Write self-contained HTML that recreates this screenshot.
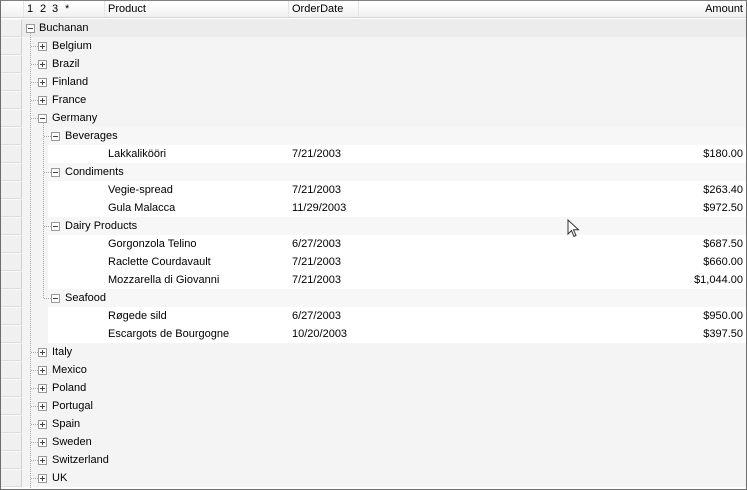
<!DOCTYPE html>
<html><head><style>
*{margin:0;padding:0;box-sizing:border-box}
body{width:747px;height:490px;overflow:hidden;background:#fff;font-family:"Liberation Sans",sans-serif;font-size:11px;color:#000;position:relative}
.frame{position:absolute;left:0;top:0;width:747px;height:490px;border:1px solid #6d6d6d;border-top:1px solid #808080}
.hdr{position:absolute;left:1px;top:1px;width:745px;height:17px;background:linear-gradient(#fff,#f1f1f1);border-bottom:1px solid #d4d4d4}
.hs{position:absolute;top:1px;width:1px;height:16px;background:#e6e6e6}
.t{position:absolute;white-space:nowrap;line-height:19px}
.row{position:absolute;left:22px;width:724px;height:18px}
.rh{position:absolute;left:1px;width:21px;height:18px;background:#f0f0f0;border-top:1px solid #fafafa;border-bottom:1px solid #dcdcdc;border-right:1px solid #d0d0d0}
.box{position:absolute;width:9px;height:9px;border:1px solid #9a9a9a;background:#fff}
.box:before{content:"";position:absolute;left:1px;top:3px;width:5px;height:1px;background:#444}
.plus:after{content:"";position:absolute;left:3px;top:1px;width:1px;height:5px;background:#444}
.vl{position:absolute;width:1px;border-left:1px dotted #a8a8a8}
.hl{position:absolute;height:1px;border-top:1px dotted #a8a8a8}
.r{right:4px;text-align:right}
</style></head><body>
<div class="hdr"></div>
<div class="hs" style="left:23px"></div><div class="hs" style="left:104px"></div><div class="hs" style="left:288px"></div><div class="hs" style="left:358px"></div>
<div class="t" style="left:27px;top:0;line-height:18px">1</div>
<div class="t" style="left:40px;top:0;line-height:18px">2</div>
<div class="t" style="left:52px;top:0;line-height:18px">3</div>
<div class="t" style="left:65px;top:0;line-height:18px">*</div>
<div class="t" style="left:108px;top:0;line-height:18px">Product</div>
<div class="t" style="left:292px;top:0;line-height:18px">OrderDate</div>
<div class="t" style="right:4px;top:0;line-height:18px">Amount</div>

<div class="row" style="top:19px;background:#ececec"></div>
<div class="row" style="top:37px;height:90px;background:#f4f4f4"></div>
<div class="row" style="top:109px;background:#f4f4f4"></div>
<div class="row" style="top:163px;background:#f7f7f7;left:48px;width:698px"></div>
<div class="row" style="top:217px;background:#f7f7f7;left:48px;width:698px"></div>
<div class="row" style="top:289px;background:#f7f7f7;left:48px;width:698px"></div>
<div class="row" style="top:127px;background:#f7f7f7;left:48px;width:698px"></div>
<div class="row" style="top:343px;height:144px;background:#f4f4f4"></div>
<div style="position:absolute;left:22px;top:127px;width:26px;height:216px;background:#f4f4f4"></div>

<div class="rh" style="top:19px"></div><div class="rh" style="top:37px"></div><div class="rh" style="top:55px"></div><div class="rh" style="top:73px"></div><div class="rh" style="top:91px"></div><div class="rh" style="top:109px"></div><div class="rh" style="top:127px"></div><div class="rh" style="top:145px"></div><div class="rh" style="top:163px"></div><div class="rh" style="top:181px"></div><div class="rh" style="top:199px"></div><div class="rh" style="top:217px"></div><div class="rh" style="top:235px"></div><div class="rh" style="top:253px"></div><div class="rh" style="top:271px"></div><div class="rh" style="top:289px"></div><div class="rh" style="top:307px"></div><div class="rh" style="top:325px"></div><div class="rh" style="top:343px"></div><div class="rh" style="top:361px"></div><div class="rh" style="top:379px"></div><div class="rh" style="top:397px"></div><div class="rh" style="top:415px"></div><div class="rh" style="top:433px"></div><div class="rh" style="top:451px"></div><div class="rh" style="top:469px"></div>

<div class="vl" style="left:30px;top:33px;height:455px"></div>
<div class="vl" style="left:43px;top:123px;height:175px"></div>
<div class="hl" style="left:31px;top:46px;width:7px"></div>
<div class="hl" style="left:31px;top:64px;width:7px"></div>
<div class="hl" style="left:31px;top:82px;width:7px"></div>
<div class="hl" style="left:31px;top:100px;width:7px"></div>
<div class="hl" style="left:31px;top:118px;width:7px"></div>
<div class="hl" style="left:44px;top:136px;width:7px"></div>
<div class="hl" style="left:44px;top:172px;width:7px"></div>
<div class="hl" style="left:44px;top:226px;width:7px"></div>
<div class="hl" style="left:44px;top:298px;width:7px"></div>
<div class="hl" style="left:31px;top:352px;width:7px"></div>
<div class="hl" style="left:31px;top:370px;width:7px"></div>
<div class="hl" style="left:31px;top:388px;width:7px"></div>
<div class="hl" style="left:31px;top:406px;width:7px"></div>
<div class="hl" style="left:31px;top:424px;width:7px"></div>
<div class="hl" style="left:31px;top:442px;width:7px"></div>
<div class="hl" style="left:31px;top:460px;width:7px"></div>
<div class="hl" style="left:31px;top:478px;width:7px"></div>

<div class="box" style="left:26px;top:24px"></div>
<div class="box plus" style="left:38px;top:42px"></div>
<div class="box plus" style="left:38px;top:60px"></div>
<div class="box plus" style="left:38px;top:78px"></div>
<div class="box plus" style="left:38px;top:96px"></div>
<div class="box" style="left:38px;top:114px"></div>
<div class="box" style="left:51px;top:132px"></div>
<div class="box" style="left:51px;top:168px"></div>
<div class="box" style="left:51px;top:222px"></div>
<div class="box" style="left:51px;top:294px"></div>
<div class="box plus" style="left:38px;top:348px"></div>
<div class="box plus" style="left:38px;top:366px"></div>
<div class="box plus" style="left:38px;top:384px"></div>
<div class="box plus" style="left:38px;top:402px"></div>
<div class="box plus" style="left:38px;top:420px"></div>
<div class="box plus" style="left:38px;top:438px"></div>
<div class="box plus" style="left:38px;top:456px"></div>
<div class="box plus" style="left:38px;top:474px"></div>

<div class="t" style="left:39px;top:19px">Buchanan</div>
<div class="t" style="left:52px;top:37px">Belgium</div>
<div class="t" style="left:52px;top:55px">Brazil</div>
<div class="t" style="left:52px;top:73px">Finland</div>
<div class="t" style="left:52px;top:91px">France</div>
<div class="t" style="left:52px;top:109px">Germany</div>
<div class="t" style="left:65px;top:127px">Beverages</div>
<div class="t" style="left:108px;top:145px">Lakkalikööri</div><div class="t" style="left:292px;top:145px">7/21/2003</div><div class="t r" style="top:145px">$180.00</div>
<div class="t" style="left:65px;top:163px">Condiments</div>
<div class="t" style="left:108px;top:181px">Vegie-spread</div><div class="t" style="left:292px;top:181px">7/21/2003</div><div class="t r" style="top:181px">$263.40</div>
<div class="t" style="left:108px;top:199px">Gula Malacca</div><div class="t" style="left:292px;top:199px">11/29/2003</div><div class="t r" style="top:199px">$972.50</div>
<div class="t" style="left:65px;top:217px">Dairy Products</div>
<div class="t" style="left:108px;top:235px">Gorgonzola Telino</div><div class="t" style="left:292px;top:235px">6/27/2003</div><div class="t r" style="top:235px">$687.50</div>
<div class="t" style="left:108px;top:253px">Raclette Courdavault</div><div class="t" style="left:292px;top:253px">7/21/2003</div><div class="t r" style="top:253px">$660.00</div>
<div class="t" style="left:108px;top:271px">Mozzarella di Giovanni</div><div class="t" style="left:292px;top:271px">7/21/2003</div><div class="t r" style="top:271px">$1,044.00</div>
<div class="t" style="left:65px;top:289px">Seafood</div>
<div class="t" style="left:108px;top:307px">Røgede sild</div><div class="t" style="left:292px;top:307px">6/27/2003</div><div class="t r" style="top:307px">$950.00</div>
<div class="t" style="left:108px;top:325px">Escargots de Bourgogne</div><div class="t" style="left:292px;top:325px">10/20/2003</div><div class="t r" style="top:325px">$397.50</div>
<div class="t" style="left:52px;top:343px">Italy</div>
<div class="t" style="left:52px;top:361px">Mexico</div>
<div class="t" style="left:52px;top:379px">Poland</div>
<div class="t" style="left:52px;top:397px">Portugal</div>
<div class="t" style="left:52px;top:415px">Spain</div>
<div class="t" style="left:52px;top:433px">Sweden</div>
<div class="t" style="left:52px;top:451px">Switzerland</div>
<div class="t" style="left:52px;top:469px">UK</div>

<svg style="position:absolute;left:567px;top:219px" width="14" height="20" viewBox="0 0 14 20"><path d="M1 1 L1 15 L4.5 11.5 L7 17.5 L9 16.5 L6.5 10.8 L11.5 10.8 Z" fill="#fff" stroke="#333" stroke-width="1"/></svg>

<div class="frame"></div>
</body></html>
